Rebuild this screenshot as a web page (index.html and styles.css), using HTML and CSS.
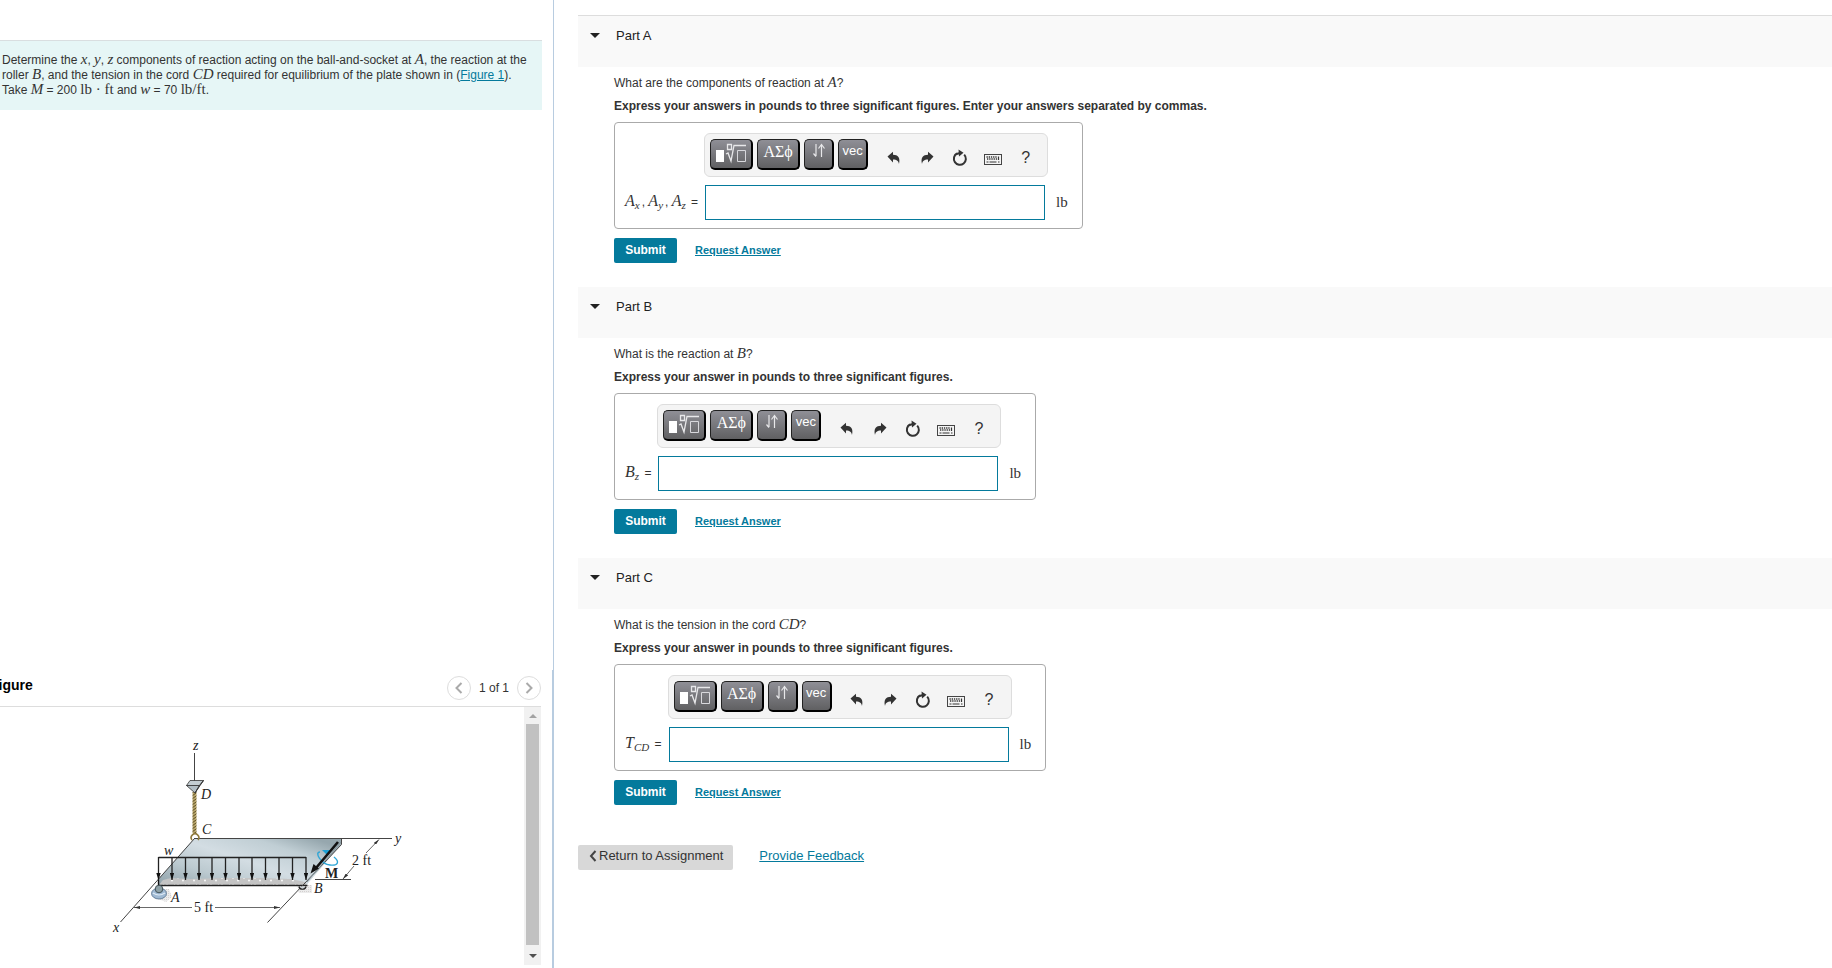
FILE: index.html
```html
<!DOCTYPE html>
<html lang="en">
<head>
<meta charset="utf-8">
<title>Equilibrium of a plate</title>
<link rel="stylesheet" href="styles.css">
</head>
<body>
<svg class="sprite" aria-hidden="true">
  <symbol id="i-root" viewBox="0 0 32 22">
    <rect x="1" y="7" width="8" height="12" fill="#fff"/>
    <path d="M12.500 1.500h4v5h-4z M11 11l2-1 3 8 3-15.500h12" fill="none" stroke="#e8e8ea" stroke-width="1.300"/>
    <path d="M22.500 7.500h8v11h-8z" fill="none" stroke="#d8d8dc"/>
  </symbol>
  <symbol id="i-updown" viewBox="0 0 14 16">
    <path d="M4 1v12M1.500 10.500L4 13.500M9.500 14V2M6.500 5.500l3-4 3 4" fill="none" stroke="#e8e8ea" stroke-width="1.200"/>
  </symbol>
  <symbol id="i-undo" viewBox="0 0 14 14">
    <path d="M0.500 5.500L6 0.800v3c5 0 7.500 3 6 9.200-.5-3-2-4.500-6-4.500v3z" fill="#333"/>
  </symbol>
  <symbol id="i-redo" viewBox="0 0 14 14">
    <path d="M13.500 5.500L8 0.800v3c-5 0-7.500 3-6 9.200.5-3 2-4.500 6-4.500v3z" fill="#333"/>
  </symbol>
  <symbol id="i-reset" viewBox="0 0 16 18">
    <path d="M5 4.500A6 6 0 1 0 12.200 5.600" fill="none" stroke="#333" stroke-width="2"/>
    <path d="M6.500 0.500L11.500 3.800 7 7.500z" fill="#333"/>
    <path d="M4.500 5L9 3.700" stroke="#333" stroke-width="2"/>
  </symbol>
  <symbol id="i-keys" viewBox="0 0 18 11">
    <rect x=".5" y=".5" width="17" height="10" fill="#f4f4f4" stroke="#444"/>
    <path d="M2.500 3h11M3 5h10" stroke="#333" stroke-width="1.300" stroke-dasharray="1.300 .9"/>
    <path d="M2.500 8h2M5.500 8h7M14 8h1.500M14.500 2.500v3.500" stroke="#333" stroke-width="1.200" fill="none"/>
  </symbol>
</svg>
<div class="page">
  <aside class="side">
    <section class="problem-pane">
      <p class="problem">Determine the <i class="m">x</i>, <i class="m">y</i>, <i class="m">z</i> components of reaction acting on the ball-and-socket at <i class="m">A</i>, the reaction at the roller <i class="m">B</i>, and the tension in the cord <i class="m">CD</i> required for equilibrium of the plate shown in (<a href="#figure">Figure 1</a>). Take <i class="m">M</i> = 200 <span class="m">lb · ft</span> and <i class="m">w</i> = 70 <span class="m">lb/ft</span>.</p>
    </section>
    <section class="figure-pane" id="figure">
      <header class="figure-head">
        <h2>Figure</h2>
        <nav class="pager">
          <button type="button" aria-label="Previous figure"><svg width="8" height="12" viewBox="0 0 8 12"><path d="M6.500 1L1.500 6l5 5"/></svg></button>
          <span>1 of 1</span>
          <button type="button" aria-label="Next figure"><svg width="8" height="12" viewBox="0 0 8 12"><path d="M1.500 1l5 5-5 5"/></svg></button>
        </nav>
      </header>
      <div class="figure-body">
        <svg class="diagram" width="300" height="200" viewBox="110 738 300 200" role="img" aria-label="Plate supported at A, B and cord CD">
          <defs>
            <linearGradient id="plate" x1="0" y1="1" x2="1" y2="0.200">
              <stop offset="0" stop-color="#8d9fa7"/><stop offset=".3" stop-color="#bccad0"/><stop offset=".55" stop-color="#d3dde3"/><stop offset=".8" stop-color="#c0ced4"/><stop offset="1" stop-color="#96a7ae"/>
            </linearGradient>
            <pattern id="grain" width="11" height="7" patternUnits="userSpaceOnUse">
              <rect width="11" height="7" fill="#c4c4c4"/><circle cx="2" cy="2" r=".8" fill="#fff"/><circle cx="7" cy="4.500" r=".9" fill="#fff"/><circle cx="9.500" cy="1.500" r=".5" fill="#eee"/>
            </pattern>
            <pattern id="ground" width="2" height="2" patternUnits="userSpaceOnUse">
              <rect width="2" height="2" fill="#ececec"/><rect width="1" height="1" fill="#d4d0d0"/>
            </pattern>
            <pattern id="rope" width="4" height="3" patternUnits="userSpaceOnUse">
              <rect width="4" height="3" fill="#b8a66c"/><path d="M0 3L4 0" stroke="#5c4d22" stroke-width="1"/>
            </pattern>
            <marker id="tip" viewBox="0 0 8 5" refX="8" refY="2.500" markerWidth="7" markerHeight="4.500" markerUnits="userSpaceOnUse" orient="auto-start-reverse"><path d="M0 0l8 2.500L0 5z" fill="#111"/></marker>
            <marker id="thin" viewBox="0 0 8 4" refX="8" refY="2" markerWidth="6" markerHeight="3" markerUnits="userSpaceOnUse" orient="auto-start-reverse"><path d="M0 0l8 2-8 2z" fill="#333"/></marker>
          </defs>
          <path d="M160 888h9l3 8-6 5-8-3z" fill="url(#ground)"/>
          <path d="M297 884h15v8h-13z" fill="url(#ground)"/>
          <path d="M194.500 837H341.500v6L309 881l-3 4H158.500v-7z" fill="url(#plate)"/>
          <path d="M159 884l4-5 8-2 20 1 30-1 40 0 30 1 14 3 2 3z" fill="url(#grain)"/>
          <path d="M158 884.500H307.500" stroke="#222" stroke-width="1.600"/>
          <path d="M158.500 879v6" stroke="#111" stroke-width="1.400"/>
          <g fill="none" stroke="#444" stroke-width="1">
            <path d="M194.500 752v28M194 837.500H392M194.500 837.500L120.500 921M341.500 837.500v6L267.500 921.500M315 878.500h36"/>
            <path d="M341 841L307 881" stroke="#87959b"/>
          </g>
          <g stroke="#444" stroke-width=".8">
            <path d="M366 852L379 838.500" marker-end="url(#thin)"/>
            <path d="M354 865L343 878" marker-end="url(#thin)"/>
            <path d="M192 906.500H134" marker-end="url(#thin)"/>
            <path d="M215 906.500H280" marker-end="url(#thin)"/>
          </g>
          <rect x="192.500" y="791" width="4" height="41" fill="url(#rope)"/>
          <path d="M192 839a3.800 3.800 0 1 1 6 0" fill="none" stroke="#8f7a3c" stroke-width="1.600"/>
          <path d="M190 779.500h13.500l-4 5h-13z" fill="#c3cdd2" stroke="#333" stroke-width=".8"/>
          <path d="M186.500 784.500h13l-4.500 7.500z" fill="#b2bec5" stroke="#333" stroke-width=".8"/>
          <path d="M199.500 784.500l4-5-8.500 12.500z" fill="#6f7d84" stroke="#333" stroke-width=".8"/>
          <path d="M158.500 856.500H306" stroke="#222" stroke-width="1.300"/>
          <g stroke="#222" stroke-width="1.300">
            <path d="M158.500 856v23" marker-end="url(#tip)"/><path d="M172 856v23" marker-end="url(#tip)"/><path d="M185.500 856v23" marker-end="url(#tip)"/><path d="M199 856v23" marker-end="url(#tip)"/><path d="M212 856v23" marker-end="url(#tip)"/><path d="M225.500 856v23" marker-end="url(#tip)"/><path d="M239 856v23" marker-end="url(#tip)"/><path d="M252 856v23" marker-end="url(#tip)"/><path d="M265.500 856v23" marker-end="url(#tip)"/><path d="M279 856v23" marker-end="url(#tip)"/><path d="M292.500 856v23" marker-end="url(#tip)"/><path d="M306 856v23" marker-end="url(#tip)"/>
          </g>
          <path d="M320 851c-6 0 1 12 10 13 8 1 10-3 4-8" fill="none" stroke="#2fa6d6" stroke-width="1.400"/>
          <path d="M322 849l10 0-5 5z" fill="#1d9fd3"/>
          <path d="M338 841L316 867" stroke="#111" stroke-width="2.600"/>
          <path d="M310.500 872.500l3-9.500 5.500 4.500z" fill="#111"/>
          <ellipse cx="159" cy="892.500" rx="7.500" ry="5.500" fill="#9fb9d3" stroke="#566f8a" stroke-width=".8"/>
          <path d="M153 892q6 4 12 0" fill="none" stroke="#dfeaf5" stroke-width="1.200"/>
          <circle cx="159" cy="888" r="3.800" fill="#8fa1a6" stroke="#3b4a50" stroke-width=".9"/>
          <path d="M299 885.500a3.600 3.600 0 0 0 7 0" fill="#cfd6da" stroke="#222" stroke-width="1.200"/>
          <g class="dia-text">
            <text x="193" y="749">z</text><text x="201" y="798">D</text><text x="202" y="833">C</text><text x="395" y="842">y</text>
            <text x="164" y="854">w</text><text x="171" y="901">A</text><text x="314" y="892">B</text><text x="113" y="931">x</text>
            <text class="bold" x="325" y="877">M</text><text class="up" x="352" y="864">2 ft</text><text class="up" x="194" y="911">5 ft</text>
          </g>
        </svg>
        <div class="scrollbar" aria-hidden="true"><i class="up-arrow"></i><b class="thumb"></b><i class="down-arrow"></i></div>
      </div>
    </section>
  </aside>

  <main class="parts">
    <section class="part">
      <h2 class="part-head">Part A</h2>
      <div class="part-body">
        <p>What are the components of reaction at <i class="m">A</i>?</p>
        <p class="instr">Express your answers in pounds to three significant figures. Enter your answers separated by commas.</p>
        <div class="answer">
          <div class="toolbar">
            <button type="button" class="key wide" aria-label="Templates"><svg width="32" height="22"><use href="#i-root"/></svg></button>
            <button type="button" class="key wide greek">ΑΣϕ</button>
            <button type="button" class="key" aria-label="Subscript and superscript"><svg width="14" height="16"><use href="#i-updown"/></svg></button>
            <button type="button" class="key vec">vec</button>
            <div class="tools">
              <button type="button" aria-label="Undo"><svg width="14" height="14"><use href="#i-undo"/></svg></button>
              <button type="button" aria-label="Redo"><svg width="14" height="14"><use href="#i-redo"/></svg></button>
              <button type="button" aria-label="Reset"><svg width="16" height="18"><use href="#i-reset"/></svg></button>
              <button type="button" aria-label="Keyboard shortcuts"><svg class="keys" width="18" height="11"><use href="#i-keys"/></svg></button>
              <button type="button">?</button>
            </div>
          </div>
          <label for="ans-a"><i class="m">A<sub>x</sub></i>, <i class="m">A<sub>y</sub></i>, <i class="m">A<sub>z</sub></i> =</label>
          <input id="ans-a" type="text">
          <span class="unit m">lb</span>
        </div>
        <div class="actions"><button type="submit" class="submit">Submit</button><a href="#a">Request Answer</a></div>
      </div>
    </section>

    <section class="part">
      <h2 class="part-head">Part B</h2>
      <div class="part-body">
        <p>What is the reaction at <i class="m">B</i>?</p>
        <p class="instr">Express your answer in pounds to three significant figures.</p>
        <div class="answer">
          <div class="toolbar">
            <button type="button" class="key wide" aria-label="Templates"><svg width="32" height="22"><use href="#i-root"/></svg></button>
            <button type="button" class="key wide greek">ΑΣϕ</button>
            <button type="button" class="key" aria-label="Subscript and superscript"><svg width="14" height="16"><use href="#i-updown"/></svg></button>
            <button type="button" class="key vec">vec</button>
            <div class="tools">
              <button type="button" aria-label="Undo"><svg width="14" height="14"><use href="#i-undo"/></svg></button>
              <button type="button" aria-label="Redo"><svg width="14" height="14"><use href="#i-redo"/></svg></button>
              <button type="button" aria-label="Reset"><svg width="16" height="18"><use href="#i-reset"/></svg></button>
              <button type="button" aria-label="Keyboard shortcuts"><svg class="keys" width="18" height="11"><use href="#i-keys"/></svg></button>
              <button type="button">?</button>
            </div>
          </div>
          <label for="ans-b"><i class="m">B<sub>z</sub></i> =</label>
          <input id="ans-b" type="text">
          <span class="unit m">lb</span>
        </div>
        <div class="actions"><button type="submit" class="submit">Submit</button><a href="#b">Request Answer</a></div>
      </div>
    </section>

    <section class="part">
      <h2 class="part-head">Part C</h2>
      <div class="part-body">
        <p>What is the tension in the cord <i class="m">CD</i>?</p>
        <p class="instr">Express your answer in pounds to three significant figures.</p>
        <div class="answer">
          <div class="toolbar">
            <button type="button" class="key wide" aria-label="Templates"><svg width="32" height="22"><use href="#i-root"/></svg></button>
            <button type="button" class="key wide greek">ΑΣϕ</button>
            <button type="button" class="key" aria-label="Subscript and superscript"><svg width="14" height="16"><use href="#i-updown"/></svg></button>
            <button type="button" class="key vec">vec</button>
            <div class="tools">
              <button type="button" aria-label="Undo"><svg width="14" height="14"><use href="#i-undo"/></svg></button>
              <button type="button" aria-label="Redo"><svg width="14" height="14"><use href="#i-redo"/></svg></button>
              <button type="button" aria-label="Reset"><svg width="16" height="18"><use href="#i-reset"/></svg></button>
              <button type="button" aria-label="Keyboard shortcuts"><svg class="keys" width="18" height="11"><use href="#i-keys"/></svg></button>
              <button type="button">?</button>
            </div>
          </div>
          <label for="ans-c"><i class="m">T<sub>CD</sub></i> =</label>
          <input id="ans-c" type="text">
          <span class="unit m">lb</span>
        </div>
        <div class="actions"><button type="submit" class="submit">Submit</button><a href="#c">Request Answer</a></div>
      </div>
    </section>

    <footer class="foot">
      <button type="button" class="return"><svg width="8" height="12" viewBox="0 0 8 12"><path d="M6.500 1L2 6l4.500 5"/></svg>Return to Assignment</button>
      <a href="#feedback">Provide Feedback</a>
    </footer>
  </main>
</div>
</body>
</html>
```
FILE: styles.css
```css
* { box-sizing: border-box; }
body {
  margin: 0;
  background: #fff;
  color: #333;
  font: 12px/15px "Liberation Sans", Arial, sans-serif;
}
button, input { font-family: inherit; color: inherit; }
a { color: #047a9c; }
p, h2 { margin: 0; }
.sprite { position: absolute; width: 0; height: 0; }
.m { font-family: "Liberation Serif", "Times New Roman", serif; font-size: 15px; line-height: 13px; }
.m sub { font-size: 11px; line-height: 0; vertical-align: -3px; }

.page { display: grid; grid-template-columns: 554px 1fr; min-height: 100vh; }

/* Left column */
.side { display: flex; flex-direction: column; height: 100vh; overflow: hidden; }
.problem-pane { flex: 1; padding: 40px 11px 0 0; border-right: 1px solid #b8cce0; }
.problem {
  min-height: 70px;
  padding: 12px 2px;
  border-top: 1px solid #d9dee0;
  background: #e6f6f6;
}
.problem a { white-space: nowrap; }
.figure-pane { flex: 0 0 298px; display: flex; flex-direction: column; padding: 1px 11px 3px 0; border-right: 2px solid #b8cce0; }
.figure-head { display: flex; justify-content: space-between; height: 36px; border-bottom: 1px solid #ddd; }
.figure-head h2 { margin-left: -10px; padding-top: 6px; font-size: 14px; line-height: 17px; color: #000; }
.pager { display: flex; gap: 8px; padding-top: 5px; line-height: 24px; }
.pager button { display: grid; place-items: center; width: 24px; height: 24px; padding: 0; border: 1px solid #ddd; border-radius: 50%; background: #fff; }
.pager path { fill: none; stroke: #aaa; stroke-width: 2; }
.figure-body { flex: 1; display: flex; justify-content: space-between; }
.diagram { margin: 32px 0 0 110px; }
.dia-text { font: italic 14px "Liberation Serif", serif; fill: #222; }
.dia-text .bold { font-style: normal; font-weight: bold; }
.dia-text .up { font-style: normal; }
.scrollbar { display: flex; flex-direction: column; align-items: center; justify-content: space-between; width: 17px; padding: 7px 0; background: #f1f1f1; }
.scrollbar i { border: 4px solid transparent; }
.scrollbar .up-arrow { border-top: 0; border-bottom-color: #a3a3a3; }
.scrollbar .down-arrow { border-bottom: 0; border-top-color: #505050; }
.thumb { flex: 1; width: 13px; margin: 6px 0 9px; background: #c1c1c1; }

/* Right column */
.parts { padding: 15px 0 0 24px; }
.part:first-child .part-head { border-top: 1px solid #ddd; height: 52px; }
.part-head {
  display: flex;
  gap: 16px;
  height: 51px;
  padding: 12px;
  background: #f9f9f9;
  font-size: 13px;
  font-weight: normal;
  line-height: 15px;
  color: #222;
}
.part-head::before { content: ""; height: 0; margin-top: 5px; border: 5px solid transparent; border-top-color: #222; border-bottom: 0; }
.part-body { padding: 9px 0 24px 36px; }
.part-body p { margin-bottom: 8px; }
.instr { font-weight: bold; }
.answer {
  display: grid;
  grid-template-columns: auto 340px auto;
  width: max-content;
  align-items: center;
  row-gap: 7px;
  height: 107px;
  padding: 10px 14px 8px 10px;
  border: 1px solid #aaa;
  border-radius: 4px;
}
.answer label { grid-column: 1; grid-row: 2; padding-right: 7px; }
.answer label .m { margin-right: 2px; font-size: 16px; }
.answer input { grid-column: 2; grid-row: 2; min-width: 0; height: 35px; padding: 0 8px; border: 1px solid #047a9c; border-radius: 0; font-size: 14px; background: #fff; }
.unit { grid-column: 3; grid-row: 2; padding-left: 11px; }
.toolbar {
  grid-column: 2;
  grid-row: 1;
  display: flex;
  gap: 4px;
  width: 344px;
  height: 44px;
  margin-left: -1px;
  padding: 5px;
  border: 1px solid #ddd;
  border-radius: 6px;
  background: #f4f4f4;
}
.key {
  display: flex;
  justify-content: center;
  width: 30px;
  height: 31px;
  padding: 3px 0 0;
  border: 1px solid #222;
  border-right: 2px solid #000;
  border-bottom: 2px solid #000;
  border-radius: 5px;
  background: linear-gradient(#8f8f96, #606062);
  color: #fff;
}
.key.wide { width: 43px; }
.key svg { display: block; }
.greek { font: 16px/17px "Liberation Serif", serif; }
.vec { font-size: 13px; line-height: 15px; }
.tools { display: flex; flex: 1; padding: 5px 0 0 5px; }
.tools button { flex: 1; display: grid; place-items: center; padding: 0; border: 0; background: none; font-size: 16px; color: #333; }
.keys { margin-top: 4px; }
.actions { display: flex; align-items: center; gap: 18px; margin-top: 9px; font-size: 11px; font-weight: bold; }
.submit { width: 63px; height: 25px; padding: 0 0 2px; border: 0; border-radius: 2px; background: #047a9c; color: #fff; font-size: 12px; font-weight: bold; }
.foot { display: flex; align-items: center; gap: 26px; padding-top: 16px; font-size: 13px; }
.return { display: flex; align-items: center; gap: 2px; height: 25px; padding: 0 10px 4px 11px; border: 0; border-radius: 2px; background: #d8d8d8; font-size: 13px; }
.return path { fill: none; stroke: #444; stroke-width: 2; }
.foot a { padding-bottom: 4px; }
```
